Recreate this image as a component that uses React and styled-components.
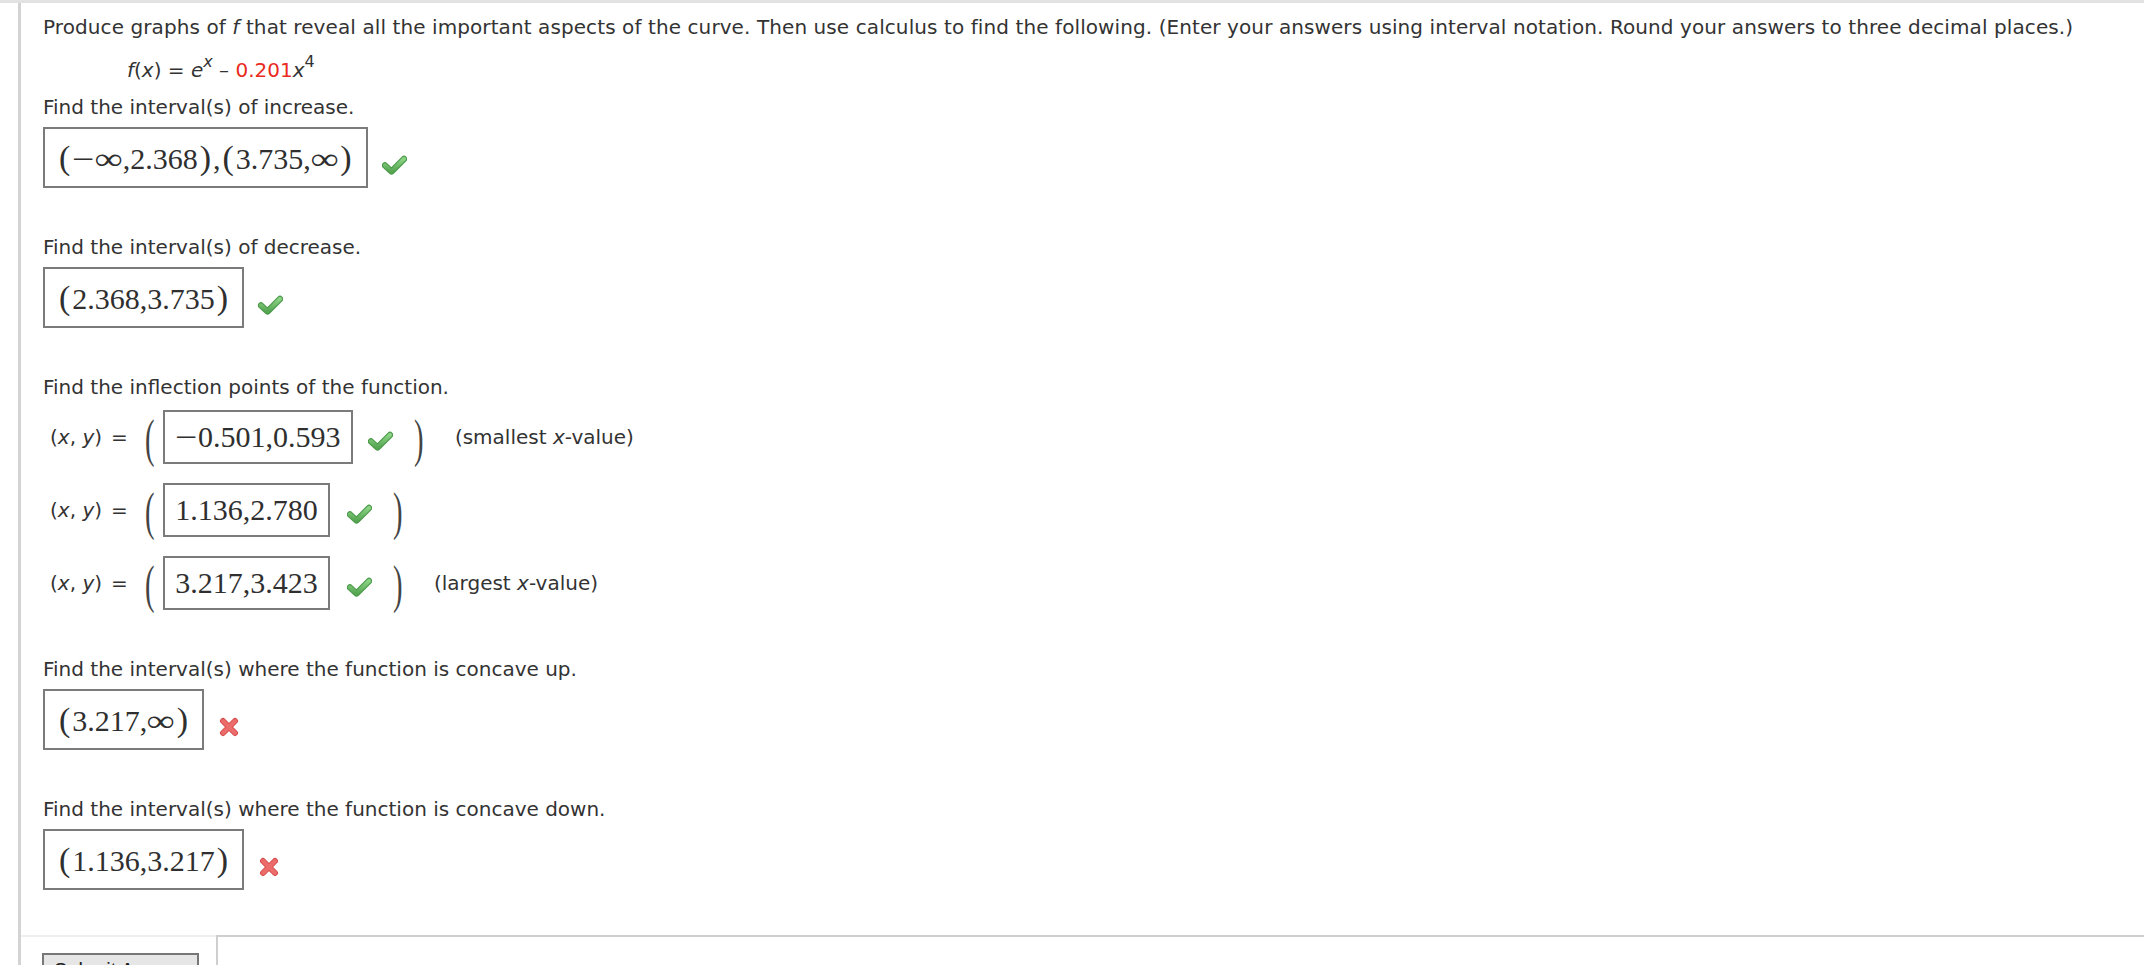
import React from "react";
import styled, { createGlobalStyle } from "styled-components";

const GlobalStyle = createGlobalStyle`
  html, body {
    margin: 0;
    padding: 0;
    background: #fff;
  }
  body {
    font-family: "DejaVu Sans", Verdana, sans-serif;
    font-size: 20px;
    color: #333;
  }
`;

const parts = [
  { id: "inc", label: "Find the interval(s) of increase.", answer: "(−∞,2.368),(3.735,∞)", correct: true },
  { id: "dec", label: "Find the interval(s) of decrease.", answer: "(2.368,3.735)", correct: true },
  {
    id: "infl",
    label: "Find the inflection points of the function.",
    points: [
      { answer: "−0.501,0.593", note: "smallest" },
      { answer: "1.136,2.780" },
      { answer: "3.217,3.423", note: "largest" },
    ],
  },
  { id: "up", label: "Find the interval(s) where the function is concave up.", answer: "(3.217,∞)", correct: false },
  { id: "down", label: "Find the interval(s) where the function is concave down.", answer: "(1.136,3.217)", correct: false },
];

// math answers: widen a few glyphs so Liberation Serif reads like the TeX font
const renderMath = (str) =>
  str.split("").map((ch, i) => {
    if (ch === "(" || ch === ")") return <Paren key={i}>{ch}</Paren>;
    if (ch === "−") return <Wide key={i}>{ch}</Wide>;
    if (ch === "∞") return <Wide key={i}>{ch}</Wide>;
    return ch;
  });

const CheckIcon = () => (
  <svg width="25" height="20" viewBox="0 0 25 20">
    <defs>
      <linearGradient id="chkFill" x1="0" y1="0" x2="0" y2="1">
        <stop offset="0" stopColor="#8ad384" />
        <stop offset="1" stopColor="#55a551" />
      </linearGradient>
    </defs>
    <path d="M3 10.5 L9.5 16.5 L22 4" fill="none" stroke="#4c994a" strokeWidth="6.4" strokeLinecap="round" strokeLinejoin="round" />
    <path d="M3 10.5 L9.5 16.5 L22 4" fill="none" stroke="url(#chkFill)" strokeWidth="4.2" strokeLinecap="round" strokeLinejoin="round" />
  </svg>
);

const CrossIcon = () => (
  <svg width="20" height="20" viewBox="0 0 20 20">
    <path d="M4 4 L16 16 M16 4 L4 16" fill="none" stroke="#d54c4c" strokeWidth="6" strokeLinecap="round" />
    <path d="M4 4 L16 16 M16 4 L4 16" fill="none" stroke="#ec6b6b" strokeWidth="4" strokeLinecap="round" />
  </svg>
);

const App = () => {
  return (
    <Page>
      <GlobalStyle />
      <Question>
        <Content>
          <Prompt>
            Produce graphs of <i>f</i> that reveal all the important aspects of the curve. Then use calculus to find
            the following. (Enter your answers using interval notation. Round your answers to three decimal places.)
          </Prompt>
          <Formula>
            <i>f</i>(<i>x</i>) = <i>e</i>
            <Sup><i>x</i></Sup> – <Red>0.201</Red>
            <i>x</i>
            <Sup>4</Sup>
          </Formula>

          {parts.map((part, idx) => (
            <Part key={part.id} $first={idx === 0}>
              <Label>{part.label}</Label>
              {part.points ? (
                <Points>
                  {part.points.map((pt, j) => (
                    <PointRow key={j}>
                      <Coord>
                        (<i>x</i>, <i>y</i>)
                      </Coord>
                      <Equals>=</Equals>
                      <BigParen>(</BigParen>
                      <AnswerBox $compact>
                        <MathText>{renderMath(pt.answer)}</MathText>
                      </AnswerBox>
                      <Mark $gap={j === 0 ? 15 : 17}>
                        <CheckIcon />
                      </Mark>
                      <BigParen $close>)</BigParen>
                      {pt.note && (
                        <Note>
                          ({pt.note} <i>x</i>-value)
                        </Note>
                      )}
                    </PointRow>
                  ))}
                </Points>
              ) : (
                <AnswerRow>
                  <AnswerBox>
                    <MathText>{renderMath(part.answer)}</MathText>
                  </AnswerBox>
                  <Mark $gap={part.correct ? 14 : 15}>{part.correct ? <CheckIcon /> : <CrossIcon />}</Mark>
                </AnswerRow>
              )}
            </Part>
          ))}
        </Content>

        <Footer>
          <ButtonCell>
            <SubmitButton type="button">Submit Answer</SubmitButton>
          </ButtonCell>
          <SidePanel />
        </Footer>
      </Question>
    </Page>
  );
};

const Page = styled.div`
  border-top: 3px solid #e2e2e2;
  min-height: 100vh;
  box-sizing: border-box;
`;

const Question = styled.div`
  margin-left: 18px;
  border-left: 3px solid #d3d3d3;
`;

const Content = styled.div`
  padding: 9px 0 45px 22px;
`;

const Prompt = styled.p`
  margin: 0;
  line-height: 30px;
  letter-spacing: 0.09px;
`;

const Formula = styled.div`
  margin: 13px 0 0 84px;
  line-height: 30px;
`;

const Sup = styled.sup`
  font-size: 16px;
  line-height: 0;
  vertical-align: 10px;
`;

const Red = styled.span`
  color: #ea2a20;
`;

const Part = styled.section`
  margin-top: ${(p) => (p.$first ? "7px" : "44px")};
`;

const Label = styled.div`
  line-height: 30px;
  margin-bottom: 5px;
`;

const AnswerRow = styled.div`
  display: flex;
  align-items: flex-end;
`;

const AnswerBox = styled.div`
  display: flex;
  align-items: center;
  box-sizing: border-box;
  height: ${(p) => (p.$compact ? "54px" : "61px")};
  padding: 0 ${(p) => (p.$compact ? "10px" : "12px")};
  border: 2px solid #7b7b7b;
  background: #fff;
`;

const MathText = styled.span`
  font-family: "Liberation Serif", "Times New Roman", serif;
  font-size: 30px;
  line-height: 1;
  color: #2f2f2f;
  white-space: nowrap;
`;

const Paren = styled.span`
  font-size: 34px;
  padding: 0 2px;
`;

const Wide = styled.span`
  display: inline-block;
  transform: scaleX(1.32);
  padding: 0 3px;
`;

const Mark = styled.span`
  display: flex;
  align-self: flex-end;
  margin-bottom: 13px;
  margin-left: ${(p) => p.$gap}px;
`;

const Points = styled.div`
  display: flex;
  flex-direction: column;
  gap: 19px;
  margin-top: 8px;
`;

const PointRow = styled.div`
  display: flex;
  align-items: center;
  height: 54px;
  padding-left: 7px;
`;

const Coord = styled.span`
  white-space: nowrap;
`;

const Equals = styled.span`
  margin-left: 9px;
`;

const BigParen = styled.span`
  display: inline-block;
  font-family: "Liberation Serif", "Times New Roman", serif;
  font-size: 52px;
  line-height: 46px;
  color: #444;
  transform: scaleX(0.55);
  margin-top: 4px;
  margin-left: ${(p) => (p.$close ? "17px" : "13px")};
  margin-right: ${(p) => (p.$close ? "0" : "5px")};
`;

const Note = styled.span`
  margin-left: 28px;
  white-space: nowrap;
`;

const Footer = styled.div`
  display: flex;
  min-height: 60px;
`;

const ButtonCell = styled.div`
  width: 195px;
  border-top: 2px solid #efefef;
  padding: 16px 0 0 21px;
  box-sizing: border-box;
`;

const SubmitButton = styled.button`
  font-family: "Liberation Sans", Arial, sans-serif;
  font-size: 20px;
  color: #222;
  background: #e6e6e6;
  border: 2px solid #777;
  padding: 4px 10px;
  cursor: pointer;
`;

const SidePanel = styled.div`
  flex: 1;
  border-top: 2px solid #cfcfcf;
  border-left: 2px solid #cfcfcf;
  min-height: 120px;
`;

export default App;
